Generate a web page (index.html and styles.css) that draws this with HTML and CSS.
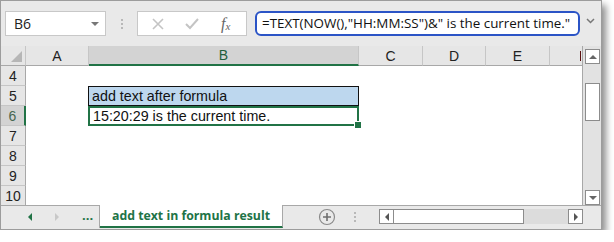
FILE: index.html
```html
<!DOCTYPE html>
<html lang="en">
<head>
    <meta charset="UTF-8">
    <title>add text in formula result</title>
    <link rel="stylesheet" href="styles.css">
</head>
<body>
    <div class="window">
        <!-- Formula bar -->
        <div class="formula-bar">
            <div class="name-box">
                <span>B6</span>
                <span class="caret"></span>
            </div>
            <div class="grip"><i></i><i></i><i></i></div>
            <div class="fx-buttons">
                <svg width="14" height="14" viewBox="0 0 14 14"><path d="M2 2 L12 12 M12 2 L2 12" stroke="#c4c4c4" stroke-width="1.6" fill="none"/></svg>
                <svg width="16" height="14" viewBox="0 0 16 14"><path d="M2 7 L6 11 L14 2" stroke="#c4c4c4" stroke-width="2" fill="none"/></svg>
                <span class="fx">f<sub>x</sub></span>
            </div>
            <div class="formula-input">=TEXT(NOW(),"HH:MM:SS")&amp;" is the current time."</div>
            <div class="expand">
                <svg width="9" height="6" viewBox="0 0 9 6"><path d="M1 1 L4.5 4.5 L8 1" stroke="#777" stroke-width="1.5" fill="none"/></svg>
            </div>
        </div>

        <!-- Sheet -->
        <div class="sheet">
            <div class="grid">
                <div class="corner"></div>
                <div class="col-head">A</div>
                <div class="col-head active">B</div>
                <div class="col-head">C</div>
                <div class="col-head">D</div>
                <div class="col-head">E</div>
                <div class="col-head cut"><span class="f-stem"></span></div>

                <div class="row-head">4</div>
                <div class="cell span"></div>

                <div class="row-head">5</div>
                <div class="cell"></div>
                <div class="cell header-cell">add text after formula</div>
                <div class="cell rest"></div>

                <div class="row-head active">6</div>
                <div class="cell"></div>
                <div class="cell selected">15:20:29 is the current time.<span class="handle"></span></div>
                <div class="cell rest"></div>

                <div class="row-head">7</div>
                <div class="cell span"></div>
                <div class="row-head">8</div>
                <div class="cell span"></div>
                <div class="row-head">9</div>
                <div class="cell span"></div>
                <div class="row-head last">10</div>
                <div class="cell span"></div>
            </div>
            <div class="vscroll">
                <div class="sbtn up"><span class="tri-up"></span></div>
                <div class="vthumb"></div>
                <div class="sbtn down"><span class="tri-down"></span></div>
            </div>
        </div>

        <!-- Sheet tabs -->
        <div class="tabbar">
            <div class="tab-nav">
                <span class="tri-left green"></span>
                <span class="tri-right light"></span>
                <span class="more">...</span>
            </div>
            <div class="tab">add text in formula result</div>
            <div class="tab-tools">
                <svg width="18" height="18" viewBox="0 0 18 18">
                    <circle cx="9" cy="9" r="7.5" stroke="#8a8a8a" stroke-width="1.2" fill="none"/>
                    <path d="M9 5 V13 M5 9 H13" stroke="#6f6f6f" stroke-width="1.6"/>
                </svg>
                <div class="grip small"><i></i><i></i><i></i></div>
                <div class="hscroll">
                    <div class="sbtn left"><span class="tri-left"></span></div>
                    <div class="hthumb"></div>
                    <div class="sbtn right"><span class="tri-right"></span></div>
                </div>
            </div>
        </div>
    </div>
</body>
</html>
```

FILE: styles.css
```css
/* General */
body {
    margin: 0;
    background: #ffffff;
    font-family: "Segoe UI", "Open Sans", "Liberation Sans", sans-serif;
}

.window {
    width: 600px;
    height: 228px;
    border: 1px solid #9c9c9c;
    background: #e9e9e9;
    box-shadow: 4px 5px 7px rgba(0, 0, 0, 0.45);
}

/* Formula bar */
.formula-bar {
    height: 45px;
    display: flex;
    align-items: flex-start;
    padding-top: 10px;
    padding-left: 4px;
    box-sizing: border-box;
}

.name-box {
    width: 101px;
    height: 25px;
    box-sizing: border-box;
    background: #fff;
    border: 1px solid #c8c8c8;
    display: flex;
    align-items: center;
    justify-content: space-between;
    padding: 0 6px 0 8px;
    font-size: 14px;
    color: #222;
}

.caret {
    width: 0;
    height: 0;
    border-left: 4px solid transparent;
    border-right: 4px solid transparent;
    border-top: 4px solid #777;
}

.grip {
    width: 31px;
    height: 25px;
    display: flex;
    flex-direction: column;
    align-items: center;
    justify-content: center;
    gap: 2px;
}

.grip i {
    width: 2px;
    height: 2px;
    background: #b8b8b8;
}

.fx-buttons {
    width: 110px;
    height: 25px;
    box-sizing: border-box;
    background: #fff;
    border: 1px solid #c8c8c8;
    display: flex;
    align-items: center;
    padding-left: 13px;
    gap: 19px;
}

.fx {
    font-family: "Liberation Serif", serif;
    font-style: italic;
    font-size: 16px;
    color: #666;
    margin-left: 2px;
}

.fx sub {
    font-size: 11px;
    vertical-align: -1px;
}

.formula-input {
    margin-left: 8px;
    width: 325px;
    height: 25px;
    box-sizing: border-box;
    background: #fff;
    border: 2px solid #2b54c6;
    border-radius: 6px;
    padding-left: 5px;
    font-size: 13.4px;
    line-height: 21px;
    color: #111;
    white-space: nowrap;
}

.expand {
    width: 20px;
    height: 25px;
    display: flex;
    justify-content: center;
    align-items: center;
    margin-top: -3px;
}

/* Sheet */
.sheet {
    height: 159px;
    display: flex;
}

.grid {
    width: 582px;
    display: grid;
    grid-template-columns: 25px 63px 270px 64px 63px 64px 33px;
    grid-template-rows: 20px 20px 20px 20px 20px 20px 20px 19px;
    background: #fff;
    font-family: "Liberation Sans", sans-serif;
}

.corner {
    background: #e6e6e6;
    border-right: 1px solid #c6c6c6;
    border-bottom: 1px solid #a8a8a8;
    position: relative;
}

.corner::after {
    content: "";
    position: absolute;
    right: 3px;
    bottom: 3px;
    border-left: 11px solid transparent;
    border-bottom: 11px solid #b6b6b6;
}

.col-head {
    background: #e6e6e6;
    border-right: 1px solid #c6c6c6;
    border-bottom: 1px solid #a8a8a8;
    text-align: center;
    font-size: 14px;
    line-height: 20px;
    color: #222;
}

.col-head.active {
    background: #d3d3d3;
    color: #1f5e3c;
    border-bottom: 2px solid #217346;
    line-height: 19px;
}

.col-head.cut {
    border-right: 1px solid #a8a8a8;
    display: flex;
    justify-content: flex-end;
    align-items: center;
    padding-right: 1px;
}

.f-stem {
    width: 1px;
    height: 10px;
    background: #5a1010;
}

.row-head {
    background: #e6e6e6;
    border-right: 1px solid #a8a8a8;
    border-bottom: 1px solid #c6c6c6;
    text-align: center;
    font-size: 14px;
    line-height: 20px;
    color: #222;
}

.row-head.active {
    background: #d3d3d3;
    color: #46664f;
    border-right: 2px solid #217346;
}

.row-head.last {
    border-bottom: none;
}

.cell {
    border-right: 1px solid #a8a8a8;
}

.cell.span {
    grid-column: 2 / 8;
}

.cell.rest {
    grid-column: 4 / 8;
}

.cell.header-cell,
.cell.selected {
    border-right: none;
    font-size: 14.3px;
    color: #111;
    padding-left: 3px;
    white-space: nowrap;
    position: relative;
}

.cell.header-cell {
    background: #bdd7ee;
    border: 1px solid #111;
    line-height: 18px;
    margin-left: -1px;
}

.cell.selected {
    border: 2px solid #217346;
    line-height: 17px;
    margin-left: -1px;
}

.handle {
    position: absolute;
    right: -5px;
    bottom: -5px;
    width: 6px;
    height: 6px;
    background: #217346;
    border: 1px solid #fff;
}

/* Scrollbars */
.vscroll {
    width: 18px;
    background: #e2e2e2;
    position: relative;
}

.sbtn {
    position: absolute;
    box-sizing: border-box;
    width: 15px;
    height: 15px;
    background: #fff;
    border: 1px solid #8c8c8c;
    display: flex;
    align-items: center;
    justify-content: center;
}

.sbtn.up {
    left: 2px;
    top: 3px;
}

.sbtn.down {
    left: 2px;
    bottom: 0;
}

.vthumb {
    position: absolute;
    left: 2px;
    top: 37px;
    width: 15px;
    height: 38px;
    box-sizing: border-box;
    background: #fff;
    border: 1px solid #8c8c8c;
}

.tri-up {
    border-left: 4px solid transparent;
    border-right: 4px solid transparent;
    border-bottom: 4px solid #666;
}

.tri-down {
    border-left: 4px solid transparent;
    border-right: 4px solid transparent;
    border-top: 4px solid #666;
}

.tri-left {
    border-top: 4px solid transparent;
    border-bottom: 4px solid transparent;
    border-right: 4px solid #555;
}

.tri-right {
    border-top: 4px solid transparent;
    border-bottom: 4px solid transparent;
    border-left: 4px solid #555;
}

.tri-left.green {
    border-right-color: #217346;
}

.tri-right.light {
    border-left-color: #c8c8c8;
}

/* Tab bar */
.tabbar {
    height: 23px;
    display: flex;
    border-top: 1px solid #a8a8a8;
    box-sizing: border-box;
}

.tab-nav {
    width: 99px;
    display: flex;
    align-items: center;
    border-right: 1px solid #a8a8a8;
    padding-left: 27px;
    box-sizing: border-box;
    gap: 23px;
}

.more {
    color: #217346;
    font-weight: bold;
    font-size: 13px;
    margin-top: -4px;
}

.tab {
    width: 183px;
    margin-top: -1px;
    background: #fff;
    border-right: 1px solid #a8a8a8;
    border-bottom: 2px solid #217346;
    box-sizing: border-box;
    text-align: center;
    font-size: 12.3px;
    font-weight: bold;
    color: #217346;
    line-height: 21px;
}

.tab-tools {
    flex: 1;
    display: flex;
    align-items: center;
    padding-left: 35px;
    margin-top: -1px;
}

.grip.small {
    width: 38px;
    height: 14px;
    gap: 2px;
}

.hscroll {
    position: relative;
    width: 204px;
    height: 15px;
    background: #dcdcdc;
    margin-left: 5px;
}

.sbtn.left {
    left: 0;
    top: 0;
}

.sbtn.right {
    right: 0;
    top: 0;
}

.hthumb {
    position: absolute;
    left: 14px;
    top: 0;
    width: 131px;
    height: 15px;
    box-sizing: border-box;
    background: #fff;
    border: 1px solid #8c8c8c;
}
```
